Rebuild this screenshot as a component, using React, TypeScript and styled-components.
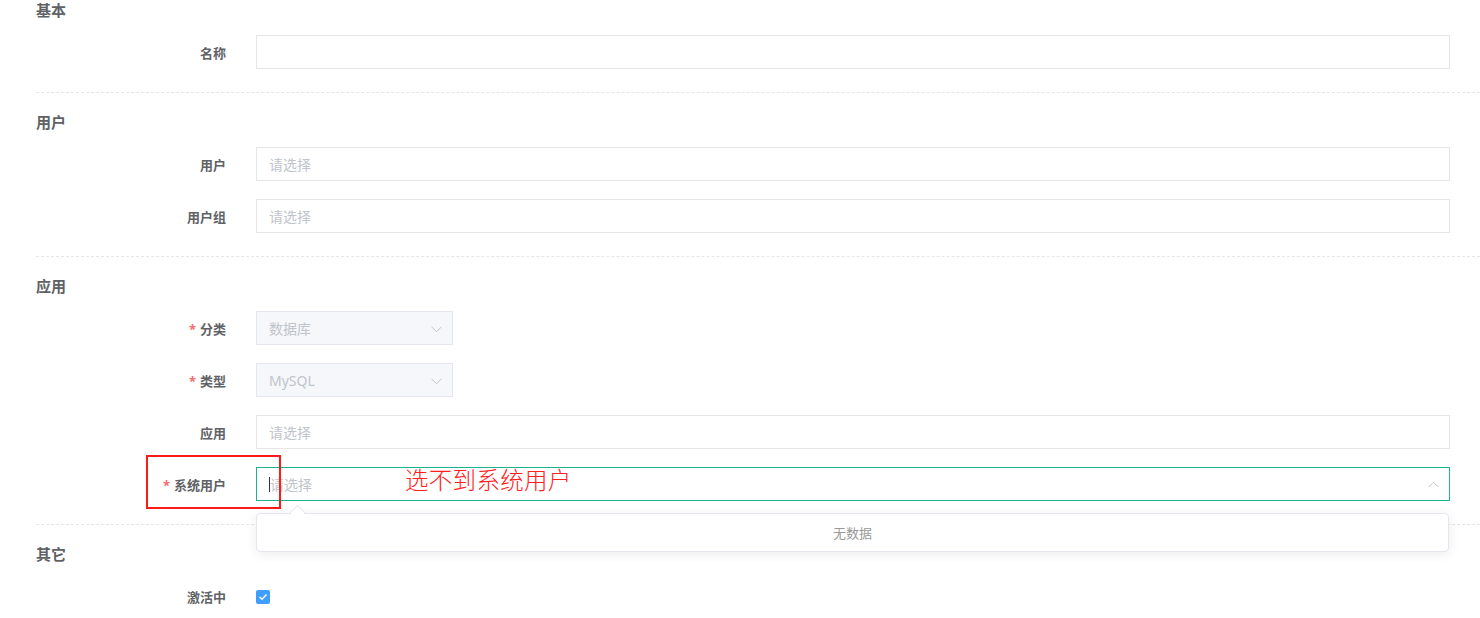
import React from "react";
import styled, { createGlobalStyle } from "styled-components";

const Global = createGlobalStyle`
  html, body { margin: 0; padding: 0; background: #fff; }
  body {
    font-family: "Noto Sans", "Noto Sans CJK SC", sans-serif;
    color: #606266;
    overflow: hidden;
  }
`;

const Page = styled.div`
  position: relative;
  width: 1480px;
  height: 618px;
  padding-left: 36px;
  box-sizing: border-box;
`;

const Section = styled.section<{ $first?: boolean; $last?: boolean }>`
  padding: ${(p) => (p.$first ? "0" : "19px")} 0 ${(p) => (p.$last ? "0" : "23px")};
  border-bottom: ${(p) => (p.$last ? "none" : "1px dashed #e6e6e6")};
`;

const SectionTitle = styled.h3`
  margin: 0 0 15px;
  height: 20px;
  line-height: 20px;
  font-size: 15px;
  font-weight: 700;
  color: #5f6265;
`;

const Rows = styled.div`
  display: flex;
  flex-direction: column;
  gap: 18px;
  padding-right: 30px;
`;

const Row = styled.div`
  display: flex;
  align-items: center;
  height: 34px;
`;

const Label = styled.label`
  width: 190px;
  flex: none;
  text-align: right;
  padding-right: 30px;
  font-size: 13px;
  font-weight: 700;
  color: #5f6266;
`;

const Star = styled.span`
  color: #f56c6c;
  margin-right: 4px;
  font-weight: 700;
`;

const Field = styled.div<{ $width?: number; $disabled?: boolean; $focused?: boolean }>`
  position: relative;
  display: flex;
  align-items: center;
  box-sizing: border-box;
  height: 34px;
  ${(p) => (p.$width ? `width: ${p.$width}px;` : "flex: 1;")}
  border: 1px solid
    ${(p) => (p.$focused ? "#1ab394" : p.$disabled ? "#e4e7ed" : "#e5e6e7")};
  background: ${(p) => (p.$disabled ? "#f5f7fa" : "#fff")};
  padding: 0 12px;
  font-size: 14px;
  color: #c0c4cc;
`;

const Caret = styled.span`
  display: inline-block;
  width: 1px;
  height: 15px;
  background: #333;
`;

const Arrow = styled.svg<{ $up?: boolean }>`
  position: absolute;
  right: 10px;
  top: 50%;
  margin-top: ${(p) => (p.$up ? "-3px" : "-2px")};
`;

const Dropdown = styled.div`
  position: absolute;
  left: 256px;
  top: 513px;
  width: 1193px;
  height: 39px;
  box-sizing: border-box;
  background: #fff;
  border: 1px solid #e4e7ed;
  border-radius: 4px;
  box-shadow: 0 2px 12px 0 rgba(0, 0, 0, 0.08);
  display: flex;
  align-items: center;
  justify-content: center;
  font-size: 13px;
  color: #999;
  &::before {
    content: "";
    position: absolute;
    left: 35px;
    top: -7px;
    width: 10px;
    height: 10px;
    background: #fff;
    border-left: 1px solid #e4e7ed;
    border-top: 1px solid #e4e7ed;
    transform: rotate(45deg);
  }
`;

const Check = styled.span`
  display: inline-flex;
  align-items: center;
  justify-content: center;
  width: 14px;
  height: 14px;
  margin-top: 2px;
  border-radius: 2px;
  background: #409eff;
`;

const Highlight = styled.div`
  position: absolute;
  left: 146px;
  top: 455px;
  width: 135px;
  height: 54px;
  box-sizing: border-box;
  border: 2px solid #ff1a1a;
`;

const Note = styled.div`
  position: absolute;
  left: 405px;
  top: 464px;
  font-size: 23.5px;
  line-height: 30px;
  font-weight: 300;
  color: #ff2020;
  font-family: "Noto Sans CJK SC", sans-serif;
  letter-spacing: 0.3px;
`;

const Down = () => (
  <Arrow width="11" height="7" viewBox="0 0 11 7">
    <path d="M0.5 0.8 L5.5 5.8 L10.5 0.8" fill="none" stroke="#c0c4cc" strokeWidth="1" />
  </Arrow>
);

const Up = () => (
  <Arrow $up width="11" height="7" viewBox="0 0 11 7">
    <path d="M0.5 6.2 L5.5 1.2 L10.5 6.2" fill="none" stroke="#c0c4cc" strokeWidth="1" />
  </Arrow>
);

export default function App() {
  return (
    <>
      <Global />
      <Page>
        <Section $first>
          <SectionTitle>基本</SectionTitle>
          <Rows>
            <Row>
              <Label>名称</Label>
              <Field />
            </Row>
          </Rows>
        </Section>

        <Section>
          <SectionTitle>用户</SectionTitle>
          <Rows>
            <Row>
              <Label>用户</Label>
              <Field>请选择</Field>
            </Row>
            <Row>
              <Label>用户组</Label>
              <Field>请选择</Field>
            </Row>
          </Rows>
        </Section>

        <Section>
          <SectionTitle>应用</SectionTitle>
          <Rows>
            <Row>
              <Label>
                <Star>*</Star>分类
              </Label>
              <Field $width={197} $disabled>
                数据库
                <Down />
              </Field>
            </Row>
            <Row>
              <Label>
                <Star>*</Star>类型
              </Label>
              <Field $width={197} $disabled>
                MySQL
                <Down />
              </Field>
            </Row>
            <Row>
              <Label>应用</Label>
              <Field>请选择</Field>
            </Row>
            <Row>
              <Label>
                <Star>*</Star>系统用户
              </Label>
              <Field $focused>
                <Caret />
                请选择
                <Up />
              </Field>
            </Row>
          </Rows>
        </Section>

        <Section $last>
          <SectionTitle>其它</SectionTitle>
          <Rows>
            <Row>
              <Label>激活中</Label>
              <Check>
                <svg width="10" height="8" viewBox="0 0 10 8">
                  <path d="M1.5 4 L4 6.3 L8.5 1.5" fill="none" stroke="#fff" strokeWidth="1.4" />
                </svg>
              </Check>
            </Row>
          </Rows>
        </Section>

        <Dropdown>无数据</Dropdown>
        <Highlight />
        <Note>选不到系统用户</Note>
      </Page>
    </>
  );
}
